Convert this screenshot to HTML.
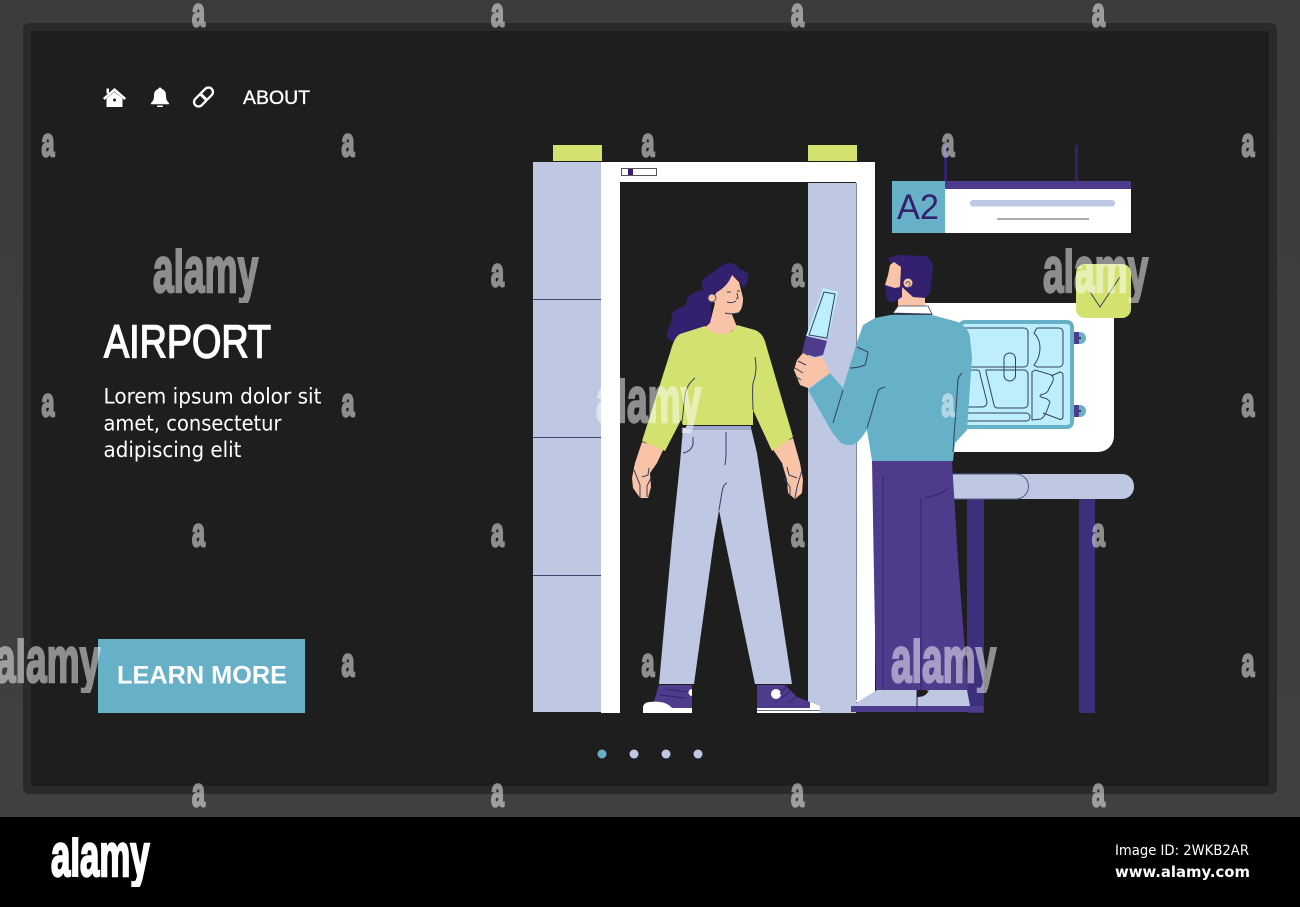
<!DOCTYPE html>
<html><head><meta charset="utf-8"><style>
html,body{margin:0;padding:0;background:#000}
svg{display:block}
text{font-family:"Liberation Sans",sans-serif}
.wm{fill:#fff;stroke:#fff;stroke-width:2.4;font-weight:bold;opacity:.5}
</style></head><body>
<svg width="1300" height="907" viewBox="0 0 1300 907" xmlns="http://www.w3.org/2000/svg" fill="none">
<defs>
<linearGradient id="o" x1="0" y1="0" x2="0" y2="1"><stop offset="0" stop-color="#3c3c3c"/><stop offset="1" stop-color="#404040"/></linearGradient>
<clipPath id="bands"><rect x="-10" y="248" width="1320" height="55"/><rect x="-10" y="378" width="1320" height="55"/><rect x="-10" y="638" width="1320" height="55"/></clipPath>
<clipPath id="logo"><rect x="40" y="837" width="130" height="50"/></clipPath>
</defs>
<rect width="1300" height="817" fill="url(#o)"/>
<rect y="817" width="1300" height="90" fill="#000"/>
<rect x="23" y="23" width="1254" height="771" rx="6" fill="#2a2a2a"/>
<rect x="31" y="31" width="1238" height="755" fill="#1e1e1e"/>

<!-- nav -->
<g fill="#fff">
<path d="M103 98 L114.500 88 L126 98 L124.500 100 L114.500 91.500 L104.500 100Z"/>
<rect x="106.500" y="88.500" width="2.500" height="5"/>
<path d="M106.500 98.500 L114.500 92 L122.500 98.500 V107 H106.500Z"/>
<path d="M160 87.500c1 0 1.600.7 1.700 1.500 3 .8 4.300 3.300 4.300 6.500 0 3.500.8 5.500 3 7.500v1.300h-18v-1.300c2.200-2 3-4 3-7.500 0-3.200 1.300-5.700 4.300-6.500.1-.8.700-1.500 1.700-1.500z"/>
<rect x="157" y="105.500" width="6" height="1.500" rx=".7"/>
</g>
<circle cx="114.500" cy="100" r="1.500" fill="#1e1e1e"/>
<g transform="rotate(-45 203.500 97)" stroke="#fff">
<rect x="192" y="92.500" width="23" height="9" rx="4.500" stroke-width="2.300"/>
<path d="M203.500 92.500V101.500" stroke-width="3"/>
</g>
<text x="243" y="104" font-size="19.500" fill="#fff" stroke="#fff" stroke-width=".35" textLength="67" lengthAdjust="spacingAndGlyphs">ABOUT</text>

<!-- left copy -->
<text x="104" y="357.500" font-size="46" fill="#fff" stroke="#fff" stroke-width="1.500" textLength="167" lengthAdjust="spacingAndGlyphs">AIRPORT</text>
<g fill="#fff" font-size="21" style="font-family:'DejaVu Sans',sans-serif">
<text x="103.500" y="403.500" style="font-family:'DejaVu Sans',sans-serif" textLength="218" lengthAdjust="spacingAndGlyphs">Lorem ipsum dolor sit</text>
<text x="103.500" y="430.500" style="font-family:'DejaVu Sans',sans-serif" textLength="178" lengthAdjust="spacingAndGlyphs">amet, consectetur</text>
<text x="103.500" y="457" style="font-family:'DejaVu Sans',sans-serif" textLength="138" lengthAdjust="spacingAndGlyphs">adipiscing elit</text>
</g>
<rect x="98" y="639" width="207" height="74" fill="#66b0c8"/>
<text x="117" y="683.500" font-size="25" font-weight="bold" fill="#fff" textLength="170" lengthAdjust="spacingAndGlyphs">LEARN MORE</text>

<!-- dots -->
<circle cx="602" cy="754" r="4.500" fill="#66b0c8"/>
<circle cx="634" cy="754" r="4.500" fill="#bec8e3"/>
<circle cx="666" cy="754" r="4.500" fill="#bec8e3"/>
<circle cx="698" cy="754" r="4.500" fill="#bec8e3"/>

<!-- metal detector gate -->
<rect x="553" y="145" width="49" height="16" fill="#d3e26f"/>
<rect x="808" y="145" width="49" height="16" fill="#d3e26f"/>
<rect x="533" y="162" width="68" height="550" fill="#bec8e3"/>
<path d="M533 299.500H601M533 437.500H601M533 575.500H601" stroke="#3f4468" stroke-width="1"/>
<rect x="601" y="162" width="274" height="20" fill="#fff"/>
<rect x="601" y="162" width="19" height="551" fill="#fff"/>
<rect x="856" y="162" width="19" height="540" fill="#fff"/>
<rect x="808" y="183" width="48" height="530" fill="#bec8e3"/>
<path d="M856.500 183V700" stroke="#7f88a8" stroke-width="1"/>
<rect x="621.500" y="168.500" width="35" height="7" fill="#fff" stroke="#555" stroke-width="1"/>
<rect x="628" y="169" width="5" height="6" fill="#33216f"/>

<!-- sign -->
<rect x="944" y="145" width="3" height="36" fill="#33216f"/>
<rect x="1075" y="145" width="3" height="36" fill="#33216f"/>
<rect x="945" y="189" width="186" height="44" fill="#fff"/>
<rect x="945" y="181" width="186" height="8" fill="#4f3b8c"/>
<rect x="892" y="181" width="53" height="52" fill="#66b0c8"/>
<text x="897" y="219" font-size="35" fill="#33216f" textLength="42" lengthAdjust="spacingAndGlyphs">A2</text>
<rect x="970" y="200" width="145" height="6.500" rx="3" fill="#bec8e3"/>
<rect x="997" y="218.500" width="92" height="1" fill="#555"/>

<!-- x-ray screen -->
<path d="M925 303H1114V436a16 16 0 0 1-16 16H925Z" fill="#fff"/>
<circle cx="1080" cy="338" r="6" fill="#66b0c8"/>
<circle cx="1080" cy="411" r="6" fill="#66b0c8"/>
<rect x="1074" y="332" width="5" height="12" fill="#4f3b8c"/>
<rect x="1074" y="405" width="5" height="12" fill="#4f3b8c"/>
<circle cx="1080" cy="338" r="1" fill="#222"/><circle cx="1080" cy="411" r="1" fill="#222"/>
<rect x="960" y="322" width="112" height="105" rx="5" fill="#bdeefc" stroke="#66b0c8" stroke-width="4"/>
<g stroke="#33405f" stroke-width="1">
<path d="M955 328H1024a4 4 0 0 1 4 4V363a4 4 0 0 1-4 4H955"/>
<path d="M1037 328H1059a4 4 0 0 1 4 4V363a4 4 0 0 1-4 4H1037l-3-2c4-5 6-10 6-17s-3-12-6-15Z"/>
<rect x="1004" y="353" width="11.500" height="28" rx="5.700"/>
<path d="M986 370H1024a4 4 0 0 1 4 4V404a4 4 0 0 1-4 4H997a4 4 0 0 1-3-3L986 372Z"/>
<path d="M965 370H976c4 0 4 2 4 4L987 402c0 3-2 5-5 5H965"/>
<path d="M965 413H1026a4 4 0 0 1 0 8H965"/>
<path d="M1032 372 1035 370 1052 375C1056 380 1050 385 1048 391c-3 4-8 3-8 5 2 3 6 0 10 6-2 5-4 14-9 17l-9 1Z"/>
<path d="M1051 376 1060 372a3 3 0 0 1 3 3V416c0 3-2 4-4 3L1043 413"/>
</g>

<!-- check badge -->
<rect x="1076" y="264" width="55" height="54" rx="9" fill="#d3e26f"/>
<path d="M1090 292 1100 307 1120 277" stroke="#33405f" stroke-width="1"/>

<!-- table -->
<rect x="967" y="499" width="17" height="214" fill="#3e2f7c"/>
<rect x="1079" y="499" width="16" height="214" fill="#3e2f7c"/>
<rect x="945" y="474" width="189" height="25" rx="12" fill="#bec8e3"/>
<path d="M945 474H1016a12.500 12.500 0 0 1 0 25H945" stroke="#555f85" stroke-width="1"/>

<!-- woman: hair -->
<path d="M667 335C667 328 672 324 672 318 670 312 678 307 686 306 686 298 690 292 703 290 700 284 702 278 712 273 718 269 724 262 731 263 737 264 738 268 741 270 746 270 749 274 748 279 747 284 745 287 743 288L738 279 732 276C728 284 722 290 717 292L711 306V323L680 338C676 343 668 343 667 335Z" fill="#33216f"/>
<!-- woman: neck + face -->
<path d="M715 303 710 323 703 329 721 339 737 327 731 312Z" fill="#f9c3a8"/>
<path d="M732 275 739 282 743 298C743 306 741 312 737 313 730 315 721 312 716 305L712 299 717 292C723 289 729 283 732 275Z" fill="#f9c3a8"/>
<circle cx="712" cy="298" r="4" fill="#f9c3a8" stroke="#33405f" stroke-width=".8"/>
<g stroke="#33405f" stroke-width="1">
<path d="M727 292h4M737 291h3M737 293l1 5-2 1M727 302c3 1 6 1 9-1M725 313c4 1 9 1 12 0"/>
</g>
<!-- woman: hands -->
<path d="M642 442 664 448 657 463 650 473 651 487 648 498 640 498 633 488 632 478 635 463Z" fill="#f9c3a8"/>
<path d="M793 438 772 448 782 463 787 480 788 493 795 499 802 493 803 480 800 463Z" fill="#f9c3a8"/>
<!-- woman: pants -->
<path d="M683 428H751L757 453 770 540 792 684H755L725 540 719 510 714 540 694 684H659L672 540 680 463Z" fill="#bec8e3"/>
<rect x="686" y="426" width="65" height="4" fill="#9da6c9"/>
<!-- woman: sweater -->
<path d="M705 326C711 336 731 338 737 325L755 330C760 332 764 336 766 345L793 437 772 451 753 410V425H683L681 420 665 451 642 441 670 353C673 342 676 336 680 334Z" fill="#d3e26f"/>
<g stroke="#33405f" stroke-width="1">
<path d="M755 357C757 367 756 375 753 383 752 392 753 402 753 410"/>
<path d="M695 378C690 382 686 388 685 395L682 422"/>
<path d="M693 437V444C692 449 688 452 683 453"/>
<path d="M726 432V456L725 465"/>
<path d="M727 483C724 484 723 487 722 492L719 510"/>
<path d="M649 468 648 475 642 477M634 470 640 485V498M651 478 647 486 647 497"/>
<path d="M787 467 789 475 797 478M802 470 797 487 795 498M784 478 790 487 790 496"/>
</g>
<!-- woman's shoes -->
<path d="M659 685H692V708H650C656 700 656 692 659 685Z" fill="#4f3b8c"/>
<path d="M643 708C643 704 646 702 650 702 658 701 667 702 672 708H692V713H643Z" fill="#fff"/>
<path d="M757 685H785L797 697 810 702V708H757Z" fill="#4f3b8c"/>
<path d="M810 702 820 706V713H757V708H810Z" fill="#fff"/>
<path d="M757 710.500H820" stroke="#33405f" stroke-width=".8"/>
<circle cx="776" cy="694" r="5" fill="#fff"/>
<path d="M692 689a3.500 3.500 0 0 0 0 7Z" fill="#fff"/>
<path d="M665 689 687 692M660 695 685 698M790 691 782 698M796 697 788 703M788 685 780 694" stroke="#33216f" stroke-width="1"/>

<!-- man: pants + shoes -->
<path d="M872 461H952L958 560 968 690H876Z" fill="#4f3b8c"/>
<path d="M883 477V690M925 498C935 496 945 492 948 488M921 498V690" stroke="#33216f" stroke-width="1"/>
<path d="M877 690H917V706H851Z" fill="#bec8e3"/>
<path d="M928 690H967L970 706H917V698Z" fill="#bec8e3"/>
<rect x="851" y="706" width="132" height="6" fill="#4f3b8c"/>
<path d="M917 690V712" stroke="#33216f"/>
<path d="M921 690c3 2 6 2 8 0-2 5-6 7-12 7v-7Z" fill="#1e1e1e"/>
<!-- man: head -->
<path d="M898 285H925V307H898Z" fill="#f9c3a8"/>
<path d="M888 258 897 255 927 256 933 265 930 293 925 298 913 297 902 287V297L893 303 887 300 885 287 895 270Z" fill="#33216f"/>
<path d="M894 262 901 267 900 287 895 288 885 285 888 275 890 265Z" fill="#f9c3a8"/>
<circle cx="908" cy="283" r="4.500" fill="#f9c3a8"/>
<path d="M906 284c0-3 4-3 4 0s-2 2-2 4" stroke="#33405f" stroke-width=".7"/>
<path d="M893 313 898 306H928L932 314Z" fill="#fff" stroke="#33405f" stroke-width=".8"/>
<!-- man: sweater -->
<path d="M890 315H932L958 322C965 326 970 332 970 338L972 357 967 430 955 443 953 461H872L867 430 862 437C858 442 855 445 850 445 846 445 843 444 840 442L832 432 808 390 830 373 843 388 857 342 863 325 875 318Z" fill="#66b0c8"/>
<g stroke="#33405f" stroke-width="1">
<path d="M857 347 868 352C867 358 866 362 865 365 860 367 855 368 850 368"/>
<path d="M843 390 833 423"/>
<path d="M885 387C881 388 879 389 878 391L867 428"/>
<path d="M962 373C959 376 958 378 958 380L953 452"/>
<path d="M893 314.500H932"/>
</g>
<!-- wand + hand -->
<path d="M823 288 838 292 828 339 806 336Z" fill="#bdeefc"/>
<path d="M824 292 835 294 827 338 809 335Z" stroke="#33405f" stroke-width="1"/>
<path d="M806 336 827 341 823 355 815 357 802 353Z" fill="#4f3b8c"/>
<path d="M803 353 813 358 823 357 830 373 808 388 800 385 794 370 797 360Z" fill="#f9c3a8"/>
<path d="M798 361 806 365M795 368 803 373M795 376 801 380" stroke="#33405f" stroke-width="1"/>

<!-- bottom bar -->
<g clip-path="url(#logo)">
<text transform="translate(51 876) scale(.58 1)" font-size="60" font-weight="bold" fill="#fff" stroke="#fff" stroke-width="2.400">alamy</text>
</g>
<text x="1115" y="855" font-size="14" fill="#fff" style="font-family:'DejaVu Sans',sans-serif" textLength="134" lengthAdjust="spacingAndGlyphs">Image ID: 2WKB2AR</text>
<text x="1115" y="877" font-size="15.500" font-weight="bold" fill="#fff" style="font-family:'DejaVu Sans',sans-serif" textLength="135" lengthAdjust="spacingAndGlyphs">www.alamy.com</text>

<!-- watermarks: small a -->
<g class="wm" font-size="40">
<text transform="translate(192 26) scale(.58 1)">a</text><text transform="translate(491 26) scale(.58 1)">a</text><text transform="translate(791 26) scale(.58 1)">a</text><text transform="translate(1092 26) scale(.58 1)">a</text>
<text transform="translate(41.500 156) scale(.58 1)">a</text><text transform="translate(341.500 156) scale(.58 1)">a</text><text transform="translate(641.500 156) scale(.58 1)">a</text><text transform="translate(941.500 156) scale(.58 1)">a</text><text transform="translate(1241.500 156) scale(.58 1)">a</text>
<text transform="translate(491 286) scale(.58 1)">a</text><text transform="translate(791 286) scale(.58 1)">a</text>
<text transform="translate(41.500 416) scale(.58 1)">a</text><text transform="translate(341.500 416) scale(.58 1)">a</text><text transform="translate(941.500 416) scale(.58 1)">a</text><text transform="translate(1241.500 416) scale(.58 1)">a</text>
<text transform="translate(192 546) scale(.58 1)">a</text><text transform="translate(491 546) scale(.58 1)">a</text><text transform="translate(791 546) scale(.58 1)">a</text><text transform="translate(1092 546) scale(.58 1)">a</text>
<text transform="translate(341.500 676) scale(.58 1)">a</text><text transform="translate(641.500 676) scale(.58 1)">a</text><text transform="translate(1241.500 676) scale(.58 1)">a</text>
<text transform="translate(192 806) scale(.58 1)">a</text><text transform="translate(491 806) scale(.58 1)">a</text><text transform="translate(791 806) scale(.58 1)">a</text><text transform="translate(1092 806) scale(.58 1)">a</text>
</g>
<!-- watermarks: large alamy -->
<g class="wm" font-size="64" clip-path="url(#bands)">
<text transform="translate(153 292) scale(.58 1)">alamy</text>
<text transform="translate(1043 292) scale(.58 1)">alamy</text>
<text transform="translate(596 422) scale(.58 1)">alamy</text>
<text transform="translate(-5 682) scale(.58 1)">alamy</text>
<text transform="translate(891 682) scale(.58 1)">alamy</text>
</g>
</svg>
</body></html>
